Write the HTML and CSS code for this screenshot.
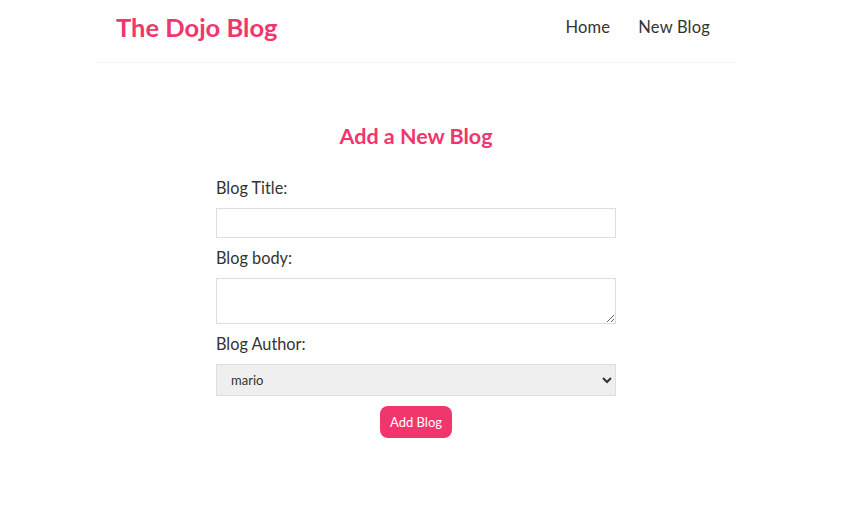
FILE: index.html
```html
<!DOCTYPE html>
<html lang="en">
<head>
<meta charset="utf-8">
<title>The Dojo Blog</title>
<link rel="stylesheet" href="styles.css">
</head>
<body>
<div class="app">
  <nav class="navbar">
    <h1>The Dojo Blog</h1>
    <div class="links">
      <a href="#">Home</a>
      <a href="#">New Blog</a>
    </div>
  </nav>
  <div class="content">
    <div class="create">
      <h2>Add a New Blog</h2>
      <form>
        <label>Blog Title:</label>
        <input type="text">
        <label>Blog body:</label>
        <textarea></textarea>
        <label>Blog Author:</label>
        <select>
          <option value="mario">mario</option>
          <option value="yoshi">yoshi</option>
        </select>
        <button type="button">Add Blog</button>
      </form>
    </div>
  </div>
</div>
</body>
</html>
```
FILE: styles.css
```css
* {
  margin: 0;
  font-family: "Lato", "Open Sans", sans-serif;
  color: #333;
}
body {
  background: #fff;
}
.app {
  width: 832px;
}
.navbar {
  padding: 16px 20px 24px;
  height: 22px;
  display: flex;
  align-items: center;
  max-width: 600px;
  margin: 0 auto;
  border-bottom: 1px solid #f2f2f2;
}
.navbar h1 {
  color: #f1356d;
  font-size: 25.5px;
  font-weight: 700;
  line-height: 22px;
}
.navbar .links {
  margin-left: auto;
  display: flex;
}
.navbar a {
  margin-left: 16px;
  text-decoration: none;
  padding: 6px;
  font-size: 16.5px;
  letter-spacing: 0.2px;
}
.content {
  max-width: 600px;
  margin: 40px auto;
  padding: 20px;
}
.create {
  max-width: 400px;
  margin: 0 auto;
  text-align: center;
}
.create h2 {
  font-size: 21.5px;
  line-height: 25px;
  color: #f1356d;
  margin-top: 1px;
  margin-bottom: 29px;
  font-weight: 700;
}
.create label {
  text-align: left;
  display: block;
  font-size: 16.3px;
  line-height: 20px;
}
.create input,
.create textarea,
.create select {
  width: 100%;
  padding: 6px 10px;
  margin: 10px 0;
  border: 1px solid #ddd;
  box-sizing: border-box;
  display: block;
  font-size: 13px;
  background: #fff;
}
.create input {
  height: 30px;
}
.create textarea {
  height: 46px;
  resize: vertical;
}
.create select {
  height: 32px;
  background: #efefef;
  padding-left: 10px;
  border-radius: 0;
}
.create button {
  background: #f1356d;
  color: #fff;
  border: 0;
  padding: 8px 10px;
  height: 32px;
  border-radius: 8px;
  cursor: pointer;
  font-size: 13px;
}
```
